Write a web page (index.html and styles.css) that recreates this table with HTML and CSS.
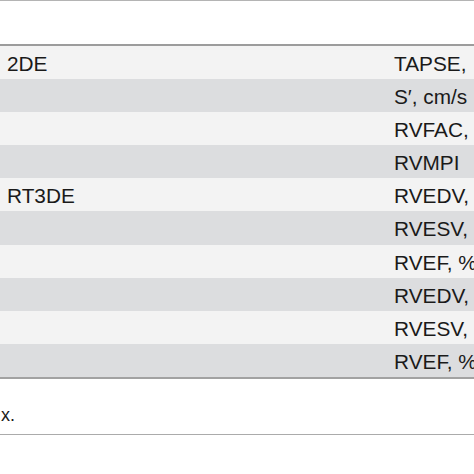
FILE: index.html
```html
<!DOCTYPE html>
<html>
<head>
<meta charset="utf-8">
<link rel="stylesheet" href="styles.css">
</head>
<body>
<div class="table">
  <div class="head"></div>
  <div class="rows">
    <div class="row light"><span class="c1">2DE</span><span class="c2">TAPSE,</span></div>
    <div class="row dark"><span class="c1"></span><span class="c2">S′, cm/s</span></div>
    <div class="row light"><span class="c1"></span><span class="c2">RVFAC,</span></div>
    <div class="row dark"><span class="c1"></span><span class="c2">RVMPI</span></div>
    <div class="row light"><span class="c1">RT3DE</span><span class="c2">RVEDV,</span></div>
    <div class="row dark"><span class="c1"></span><span class="c2">RVESV,</span></div>
    <div class="row light"><span class="c1"></span><span class="c2">RVEF, %</span></div>
    <div class="row dark"><span class="c1"></span><span class="c2">RVEDV,</span></div>
    <div class="row light"><span class="c1"></span><span class="c2">RVESV,</span></div>
    <div class="row dark"><span class="c1"></span><span class="c2">RVEF, %</span></div>
  </div>
  <div class="foot"><span class="note">x.</span></div>
</div>
</body>
</html>
```

FILE: styles.css
```css
html, body {
  margin: 0;
  padding: 0;
  background: #ffffff;
  overflow: hidden;
}
body {
  width: 474px;
  height: 474px;
  font-family: "Liberation Sans", Arial, Helvetica, sans-serif;
  color: #1a1a1a;
}
.table {
  border-top: 1px solid #b4b4b4;
}
.head {
  height: 43px;
  border-bottom: 2px solid #9c9c9c;
}
.rows {
  border-bottom: 2px solid #a2a2a2;
}
.row {
  display: grid;
  grid-template-columns: 387px 80px;
  height: 33.1px;
  box-sizing: border-box;
  padding-left: 7px;
  padding-top: 3px;
  font-size: 20.8px;
  line-height: 30px;
  white-space: nowrap;
}
.light {
  background: #f3f3f3;
}
.dark {
  background: #dcdddf;
}
.foot {
  height: 56px;
  box-sizing: border-box;
  padding-top: 26px;
  padding-left: 1px;
  font-size: 18px;
  line-height: 20px;
  border-bottom: 1px solid #ababab;
}
```
